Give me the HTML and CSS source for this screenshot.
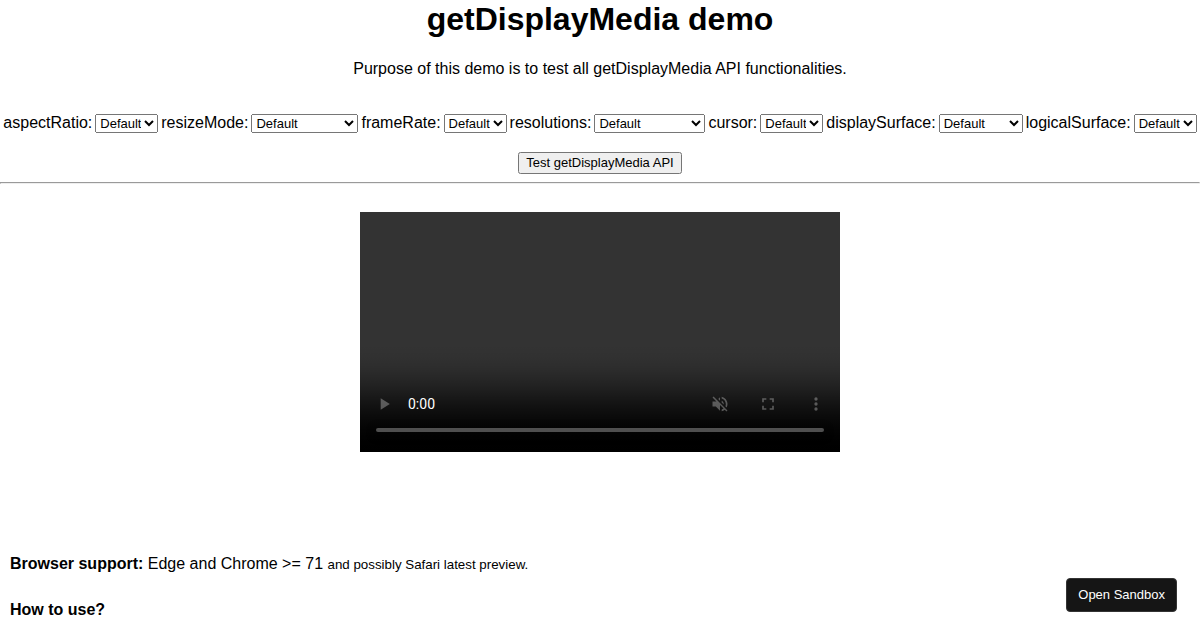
FILE: index.html
```html
<!DOCTYPE html>
<html lang="en">
<head>
  <meta charset="UTF-8">
  <meta name="viewport" content="width=device-width, initial-scale=1.0">
  <title>getDisplayMedia demo</title>
  <link rel="stylesheet" href="styles.css">
</head>
<body>
  <header class="intro">
    <h1>getDisplayMedia demo</h1>
    <p>Purpose of this demo is to test all getDisplayMedia API functionalities.</p>
  </header>

  <div class="options">
    <label for="aspectRatio">aspectRatio:</label>
    <select id="aspectRatio">
      <option>Default</option>
      <option>4:3</option>
      <option>16:9</option>
    </select>
    <label for="resizeMode">resizeMode:</label>
    <select id="resizeMode" class="select-wide">
      <option>Default</option>
      <option>none</option>
    </select>
    <label for="frameRate">frameRate:</label>
    <select id="frameRate">
      <option>Default</option>
      <option>30</option>
      <option>60</option>
    </select>
    <label for="resolutions">resolutions:</label>
    <select id="resolutions" class="select-widest">
      <option>Default</option>
      <option>1080p</option>
      <option>720p</option>
    </select>
    <label for="cursor">cursor:</label>
    <select id="cursor">
      <option>Default</option>
      <option>always</option>
      <option>never</option>
    </select>
    <label for="displaySurface">displaySurface:</label>
    <select id="displaySurface" class="select-medium">
      <option>Default</option>
      <option>monitor</option>
      <option>window</option>
    </select>
    <label for="logicalSurface">logicalSurface:</label>
    <select id="logicalSurface">
      <option>Default</option>
      <option>true</option>
    </select>
  </div>

  <div class="actions">
    <button id="btn-test" type="button">Test getDisplayMedia API</button>
  </div>

  <hr>

  <video class="preview" controls playsinline muted></video>

  <section class="notes">
    <p><b>Browser support:</b> Edge and Chrome &gt;= 71 <small>and possibly Safari latest preview.</small></p>
    <p><b>How to use?</b></p>
  </section>

  <button class="open-sandbox" type="button">Open Sandbox</button>
</body>
</html>
```
FILE: styles.css
```css
body {
  font-family: Helvetica, "Liberation Sans", Arial, sans-serif;
  font-size: 16px;
  line-height: 19px;
  margin: 0;
  color: #000;
  background: #fff;
}

h1 {
  margin: 0 0 21px;
  font-size: 32px;
  line-height: 38px;
}

p {
  margin: 0;
}

.intro {
  text-align: center;
}

.options {
  display: flex;
  flex-wrap: wrap;
  justify-content: center;
  align-items: baseline;
  gap: 3px;
  margin-top: 35px;
}

select,
button {
  font-family: inherit;
  font-size: 13px;
}

select {
  width: 63px;
}

.select-medium {
  width: 84px;
}

.select-wide {
  width: 107px;
}

.select-widest {
  width: 111px;
}

.actions {
  display: flex;
  justify-content: center;
  margin-top: 19px;
}

.actions button {
  line-height: 16px;
}

hr {
  margin: 8px 0 28px;
}

.preview {
  display: block;
  width: 40%;
  aspect-ratio: 2 / 1;
  margin: 0 auto;
}

.notes {
  margin-top: 102px;
  padding: 0 10px;
}

.notes p + p {
  margin-top: 26px;
}

/* floats over the page in the corner */
.open-sandbox {
  position: fixed;
  right: 23px;
  bottom: 18px;
  padding: 8px 11px;
  border: 1px solid #343434;
  border-radius: 4px;
  background: #151515;
  color: #fff;
  line-height: 16px;
  cursor: pointer;
}
```
